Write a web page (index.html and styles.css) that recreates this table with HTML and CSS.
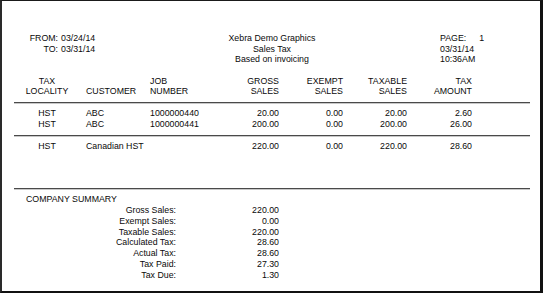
FILE: index.html
```html
<!DOCTYPE html>
<html>
<head>
<meta charset="utf-8">
<link rel="stylesheet" href="styles.css">
</head>
<body>
<div class="frame">
  <div class="report">
    <div class="head">
      <div class="head-left">
        <div class="kv"><span class="k">FROM:</span><span class="v">03/24/14</span></div>
        <div class="kv"><span class="k">TO:</span><span class="v">03/31/14</span></div>
      </div>
      <div class="head-center">
        <div>Xebra Demo Graphics</div>
        <div>Sales Tax</div>
        <div>Based on invoicing</div>
      </div>
      <div class="head-right">
        <div>PAGE:<span class="pg">1</span></div>
        <div>03/31/14</div>
        <div>10:36AM</div>
      </div>
    </div>

    <div class="grid cols">
      <div class="c">TAX<br>LOCALITY</div>
      <div class="l">&nbsp;<br>CUSTOMER</div>
      <div class="j">JOB<br>NUMBER</div>
      <div class="r">GROSS<br>SALES</div>
      <div class="r">EXEMPT<br>SALES</div>
      <div class="r">TAXABLE<br>SALES</div>
      <div class="r">TAX<br>AMOUNT</div>
      <div></div>
    </div>

    <div class="rule"></div>

    <div class="grid rows">
      <div class="c">HST</div><div class="l">ABC</div><div class="j">1000000440</div>
      <div class="r">20.00</div><div class="r">0.00</div><div class="r">20.00</div><div class="r">2.60</div><div></div>
      <div class="c">HST</div><div class="l">ABC</div><div class="j">1000000441</div>
      <div class="r">200.00</div><div class="r">0.00</div><div class="r">200.00</div><div class="r">26.00</div><div></div>
    </div>

    <div class="rule"></div>

    <div class="grid rows total">
      <div class="c">HST</div><div class="l">Canadian HST</div><div class="j"></div>
      <div class="r">220.00</div><div class="r">0.00</div><div class="r">220.00</div><div class="r">28.60</div><div></div>
    </div>

    <div class="rule rule-summary"></div>

    <div class="summary">
      <div class="sum-title">COMPANY SUMMARY</div>
      <div class="sum-grid">
        <div class="sl">Gross Sales:</div><div class="sv">220.00</div>
        <div class="sl">Exempt Sales:</div><div class="sv">0.00</div>
        <div class="sl">Taxable Sales:</div><div class="sv">220.00</div>
        <div class="sl">Calculated Tax:</div><div class="sv">28.60</div>
        <div class="sl">Actual Tax:</div><div class="sv">28.60</div>
        <div class="sl">Tax Paid:</div><div class="sv">27.30</div>
        <div class="sl">Tax Due:</div><div class="sv">1.30</div>
      </div>
    </div>
  </div>
</div>
</body>
</html>
```

FILE: styles.css
```css
html, body {
  margin: 0;
  padding: 0;
  background: #ffffff;
}

.frame {
  box-sizing: border-box;
  width: 543px;
  height: 293px;
  border-top: 1px solid #1a1a1a;
  border-left: 2px solid #2a2a2a;
  border-right: 3px solid #111111;
  border-bottom: 2px solid #111111;
  background: #ffffff;
  overflow: hidden;
}

.report {
  padding: 32px 0 0 12px;
  width: 516px;
  font-family: "Liberation Sans", Arial, sans-serif;
  font-size: 8.8px;
  line-height: 10.6px;
  color: #0a0a0a;
}

.head {
  display: grid;
  grid-template-columns: 1fr 200px 1fr;
}

.head-left {
  padding-left: 11px;
}

.kv {
  display: flex;
}

.kv .k {
  width: 33px;
  text-align: right;
}

.kv .v {
  margin-left: 3px;
}

.head-center {
  text-align: center;
}

.head-right {
  padding-left: 68px;
}

.pg {
  margin-left: 13px;
}

.grid {
  display: grid;
  grid-template-columns: 66px 70px 65px 64px 64px 64px 65px 1fr;
}

.cols {
  margin-top: 11px;
  padding-bottom: 5px;
}

.rows {
  padding: 5px 0 6px;
}

.c { text-align: center; }
.l { padding-left: 6px; }
.j { }
.r { text-align: right; }

.rule {
  height: 1px;
  background: #4a4a4a;
  box-shadow: 0 1px 0 #c8c8c8;
}

.rule-summary {
  margin-top: 30px;
}

.summary {
  padding-top: 5px;
}

.sum-title {
  padding-left: 12px;
  margin-bottom: 1px;
}

.sum-grid {
  display: grid;
  grid-template-columns: 162px 103px;
  line-height: 10.7px;
}

.sl, .sv {
  text-align: right;
}
```
